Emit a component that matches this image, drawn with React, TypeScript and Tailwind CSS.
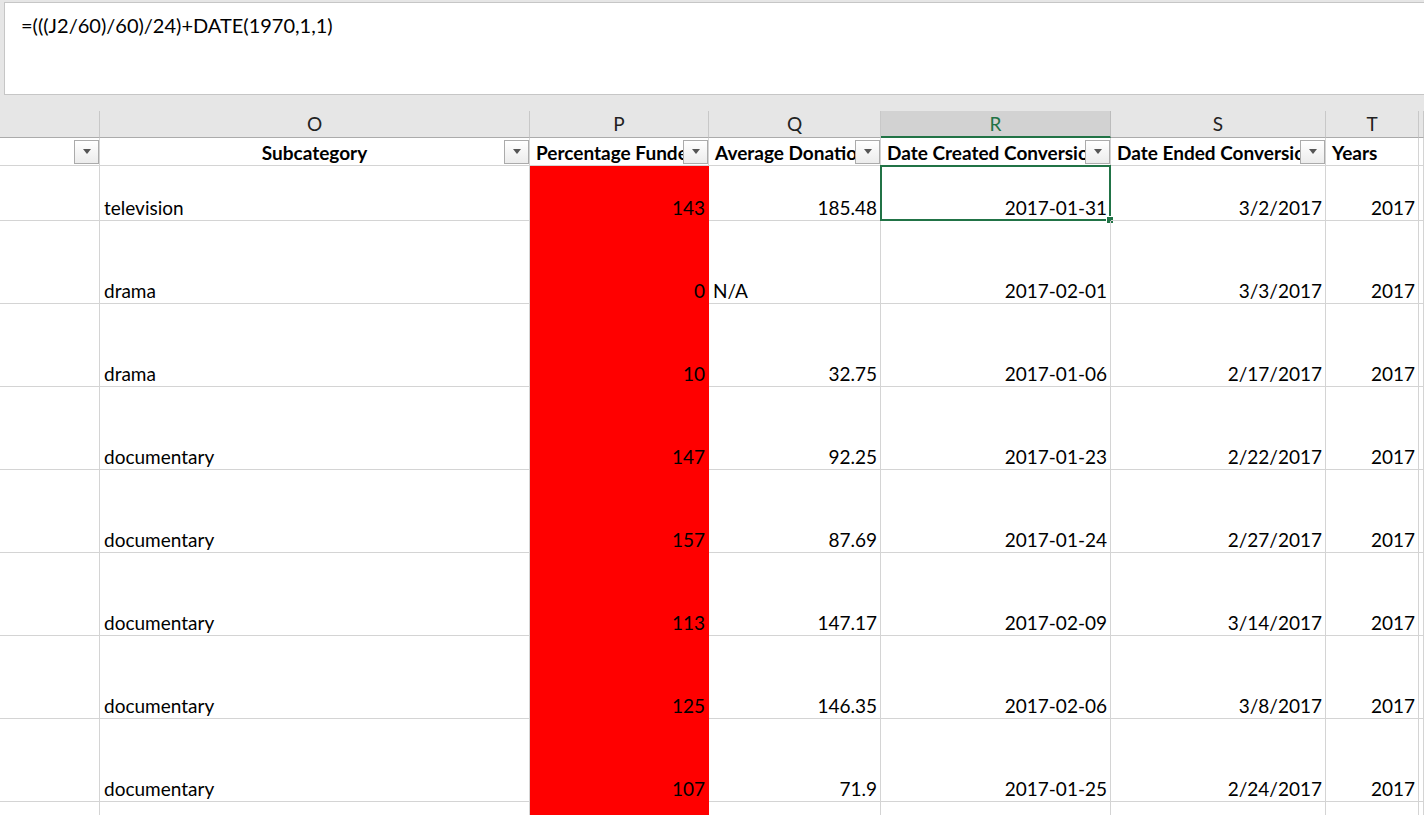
import React from "react";

const font = { fontFamily: "Lato, 'Open Sans', sans-serif" };

type Row = {
  sub: string;
  pct: string;
  avg: string;
  created: string;
  ended: string;
  year: string;
};

const rows: Row[] = [
  { sub: "television", pct: "143", avg: "185.48", created: "2017-01-31", ended: "3/2/2017", year: "2017" },
  { sub: "drama", pct: "0", avg: "N/A", created: "2017-02-01", ended: "3/3/2017", year: "2017" },
  { sub: "drama", pct: "10", avg: "32.75", created: "2017-01-06", ended: "2/17/2017", year: "2017" },
  { sub: "documentary", pct: "147", avg: "92.25", created: "2017-01-23", ended: "2/22/2017", year: "2017" },
  { sub: "documentary", pct: "157", avg: "87.69", created: "2017-01-24", ended: "2/27/2017", year: "2017" },
  { sub: "documentary", pct: "113", avg: "147.17", created: "2017-02-09", ended: "3/14/2017", year: "2017" },
  { sub: "documentary", pct: "125", avg: "146.35", created: "2017-02-06", ended: "3/8/2017", year: "2017" },
  { sub: "documentary", pct: "107", avg: "71.9", created: "2017-01-25", ended: "2/24/2017", year: "2017" },
];

function FilterButton() {
  return (
    <div className="w-[25px] h-[24px] shrink-0 border border-[#ababab] bg-gradient-to-b from-white to-[#ececec] flex items-center justify-center">
      <div className="w-0 h-0 border-l-[4px] border-r-[4px] border-t-[5px] border-l-transparent border-r-transparent border-t-[#555]" />
    </div>
  );
}

function HeadCell({ w, label, filter = true, center = false }: { w: string; label?: string; filter?: boolean; center?: boolean }) {
  return (
    <div className={`${w} shrink-0 h-full flex items-center border-r border-b border-[#d4d4d4]`}>
      <div
        className={`flex-1 min-w-0 overflow-hidden whitespace-nowrap font-bold text-[19px] leading-[24px] pt-[3px] text-black ${
          center ? "text-center pl-[25px]" : "pl-[6px]"
        }`}
      >
        {label}
      </div>
      {filter && <FilterButton />}
    </div>
  );
}

function Cell({
  w,
  children,
  right = false,
  red = false,
  selected = false,
}: {
  w: string;
  children?: React.ReactNode;
  right?: boolean;
  red?: boolean;
  selected?: boolean;
}) {
  return (
    <div
      className={`${w} shrink-0 h-full relative flex items-end whitespace-nowrap text-[19px] text-black border-r border-b ${
        red ? "bg-[#ff0000] border-[#ff0000]" : "border-[#d4d4d4]"
      } ${right ? "justify-end pr-[3px]" : "pl-[4px]"}`}
    >
      <span className="leading-[24px]">{children}</span>
      {selected && (
        <div className="absolute -left-[1px] -top-[1px] -right-[1px] -bottom-[1px] border-2 border-[#217346]">
          <div className="absolute -right-[5px] -bottom-[5px] w-[8px] h-[8px] bg-[#217346] border border-white" />
        </div>
      )}
    </div>
  );
}

export default function App() {
  const letters = [
    { w: "w-[100px]", l: "" },
    { w: "w-[430px]", l: "O" },
    { w: "w-[179px]", l: "P" },
    { w: "w-[172px]", l: "Q" },
    { w: "w-[230px]", l: "R", active: true },
    { w: "w-[215px]", l: "S" },
    { w: "w-[93px]", l: "T" },
    { w: "w-[5px]", l: "" },
  ];

  return (
    <div className="w-[1424px] h-[815px] overflow-hidden bg-white" style={font}>
      {/* Formula bar */}
      <div className="bg-[#e6e6e6] pt-[2px] pl-[4px] pb-[16px]">
        <div className="h-[93px] bg-white border-l border-t border-b border-[#c6c6c6] pl-[16px] pt-[10px] text-[20px] leading-[24px] text-black">
          =(((J2/60)/60)/24)+DATE(1970,1,1)
        </div>
      </div>

      {/* Column letters */}
      <div className="flex h-[27px] bg-[#e6e6e6]">
        {letters.map((c, i) => (
          <div
            key={i}
            className={`${c.w} shrink-0 h-full flex items-center justify-center pt-[1px] text-[19px] border-r ${
              c.active
                ? "bg-[#d2d2d2] text-[#217346] border-[#bcbcbc] border-b-2 border-b-[#217346]"
                : "text-[#222] border-[#c8c8c8] border-b border-b-[#ababab]"
            }`}
          >
            {c.l}
          </div>
        ))}
      </div>

      {/* Table header */}
      <div className="flex h-[28px]">
        <HeadCell w="w-[100px]" />
        <HeadCell w="w-[430px]" label="Subcategory" center />
        <HeadCell w="w-[179px]" label="Percentage Funded" />
        <HeadCell w="w-[172px]" label="Average Donation" />
        <HeadCell w="w-[230px]" label="Date Created Conversion" />
        <HeadCell w="w-[215px]" label="Date Ended Conversion" />
        <HeadCell w="w-[93px]" label="Years" filter={false} />
        <HeadCell w="w-[5px]" filter={false} />
      </div>

      {/* Data rows */}
      {rows.map((r, i) => (
        <div key={i} className={`flex ${i === 0 ? "h-[55px]" : "h-[83px]"}`}>
          <Cell w="w-[100px]" />
          <Cell w="w-[430px]">{r.sub}</Cell>
          <Cell w="w-[179px]" right red>
            {r.pct}
          </Cell>
          <Cell w="w-[172px]" right={r.avg !== "N/A"}>
            {r.avg}
          </Cell>
          <Cell w="w-[230px]" right selected={i === 0}>
            {r.created}
          </Cell>
          <Cell w="w-[215px]" right>
            {r.ended}
          </Cell>
          <Cell w="w-[93px]" right>
            {r.year}
          </Cell>
          <Cell w="w-[5px]" />
        </div>
      ))}
      <div className="flex h-[83px]">
        <Cell w="w-[100px]" />
        <Cell w="w-[430px]" />
        <Cell w="w-[179px]" red />
        <Cell w="w-[172px]" />
        <Cell w="w-[230px]" />
        <Cell w="w-[215px]" />
        <Cell w="w-[93px]" />
        <Cell w="w-[5px]" />
      </div>
    </div>
  );
}
